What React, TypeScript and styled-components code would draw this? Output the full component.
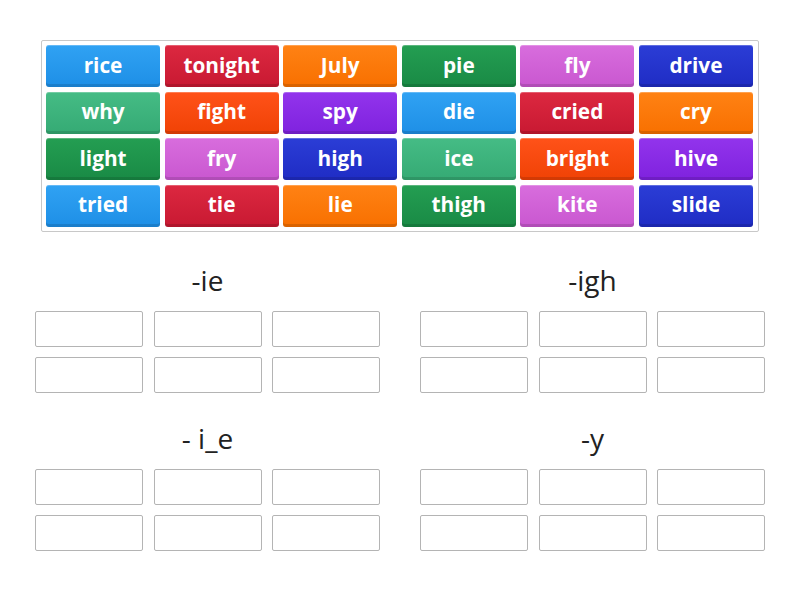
import React from 'react'
import styled, { createGlobalStyle } from 'styled-components'

const GlobalStyle = createGlobalStyle`
    html, body {
        margin: 0;
        padding: 0;
        background: #ffffff;
        font-family: "Open Sans", "Noto Sans", sans-serif;
    }
`

type Tone = 'blue' | 'red' | 'orange' | 'green' | 'pink' | 'navy' | 'teal' | 'flame' | 'purple'

const tones: Record<Tone, [string, string]> = {
    blue: ['#30a2f3', '#1e8fe6'],
    red: ['#dc2840', '#c81932'],
    orange: ['#ff8214', '#f87000'],
    green: ['#249e52', '#198a45'],
    pink: ['#d86ddd', '#c957d0'],
    navy: ['#2b3dd6', '#1f2cc4'],
    teal: ['#45bc85', '#35aa74'],
    flame: ['#ff5219', '#f04205'],
    purple: ['#9234ec', '#7f22de'],
}

const words: [string, Tone][] = [
    ['rice', 'blue'], ['tonight', 'red'], ['July', 'orange'], ['pie', 'green'], ['fly', 'pink'], ['drive', 'navy'],
    ['why', 'teal'], ['fight', 'flame'], ['spy', 'purple'], ['die', 'blue'], ['cried', 'red'], ['cry', 'orange'],
    ['light', 'green'], ['fry', 'pink'], ['high', 'navy'], ['ice', 'teal'], ['bright', 'flame'], ['hive', 'purple'],
    ['tried', 'blue'], ['tie', 'red'], ['lie', 'orange'], ['thigh', 'green'], ['kite', 'pink'], ['slide', 'navy'],
]

const groups = ['-ie', '-igh', '- i_e', '-y']

const Page = styled.div`
    width: 800px;
    height: 600px;
    box-sizing: border-box;
    padding: 40px 35px 0 35px;
`

const Bank = styled.div`
    margin: 0 6px;
    border: 1px solid #c8c8c8;
    border-radius: 2px;
    padding: 4px 5px 4px 4px;
    display: grid;
    grid-template-columns: repeat(6, 1fr);
    column-gap: 4.5px;
    row-gap: 4.5px;
`

const Tile = styled.div<{ $tone: Tone }>`
    height: 42px;
    border-radius: 3px;
    background: linear-gradient(${p => tones[p.$tone][0]}, ${p => tones[p.$tone][1]});
    box-shadow: inset 0 1px 0 rgba(255, 255, 255, 0.25), inset 0 -3px 0 rgba(0, 0, 0, 0.12);
    display: flex;
    align-items: center;
    justify-content: center;
    padding-bottom: 3px;
    box-sizing: border-box;
    color: #ffffff;
    font-weight: 700;
    font-size: 20.8px;
`

const Groups = styled.div`
    margin-top: 33px;
    display: grid;
    grid-template-columns: 345px 345px;
    column-gap: 40px;
    row-gap: 30px;
`

const Group = styled.div`
    display: flex;
    flex-direction: column;
`

const Title = styled.div`
    height: 46px;
    text-align: center;
    font-size: 28px;
    line-height: 30px;
    color: #222222;
`

const Slots = styled.div`
    display: grid;
    grid-template-columns: repeat(3, 1fr);
    column-gap: 10.5px;
    row-gap: 10px;
`

const Slot = styled.div`
    height: 36px;
    box-sizing: border-box;
    border: 1px solid #b4b4b4;
    border-radius: 2px;
    background: #ffffff;
`

export default function App() {
    return (
        <Page>
            <GlobalStyle />
            <Bank>
                {words.map(([word, tone]) => (
                    <Tile key={word} $tone={tone}>{word}</Tile>
                ))}
            </Bank>
            <Groups>
                {groups.map(title => (
                    <Group key={title}>
                        <Title>{title}</Title>
                        <Slots>
                            {Array.from({ length: 6 }).map((_, i) => <Slot key={i} />)}
                        </Slots>
                    </Group>
                ))}
            </Groups>
        </Page>
    )
}
